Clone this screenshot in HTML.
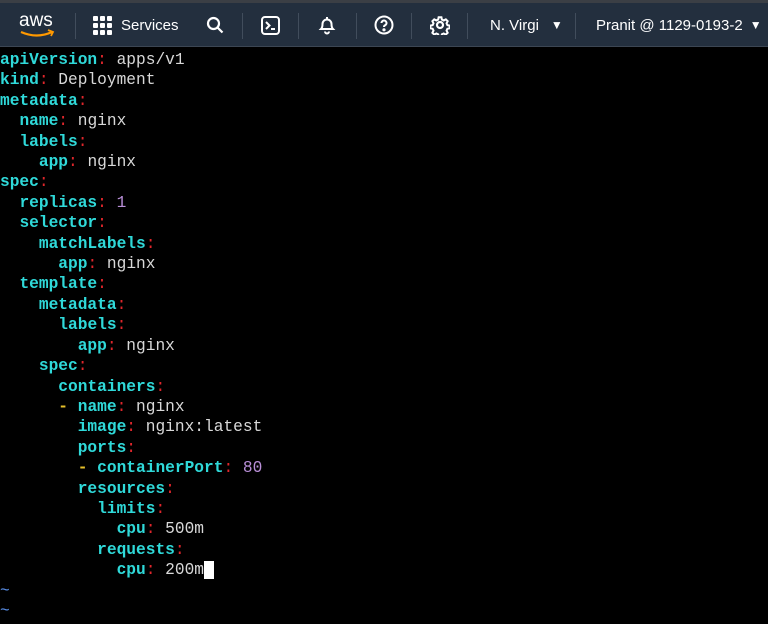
<!DOCTYPE html>
<html><head><style>
*{margin:0;padding:0;box-sizing:border-box}
body{width:768px;height:624px;background:#000;overflow:hidden;font-family:"Liberation Sans",sans-serif}
.top{position:absolute;left:0;top:0;width:768px;height:3px;background:#3b3f45}
.hdr{position:absolute;left:0;top:3px;width:768px;height:44px;background:#232f3e;border-bottom:1px solid #3c4653;color:#fff;font-size:15px}
.hdr .it{position:absolute;top:0;height:44px;display:flex;align-items:center}
.sep{position:absolute;top:10px;width:1px;height:26px;background:#414d5c}
pre{position:absolute;left:0;top:50px;font-family:"Liberation Mono",monospace;font-size:16.2px;line-height:20.4px;color:#d8d8d8}
.k{color:#2fd9d9;font-weight:bold}
.c{color:#e0262b}
.n{color:#b98fd8}
.d{color:#e6c02a;font-weight:bold}
.t{color:#5a8fe8}
.cur{background:#fff;color:#000}
</style></head><body>
<div class="top"></div>
<div class="hdr">
 <div class="it" style="left:18px;">
  <svg width="40" height="32" viewBox="0 0 40 32"><text x="1" y="17" fill="#fff" font-family="Liberation Sans" font-size="19">aws</text><path d="M3 23 Q19 30 34 23" stroke="#f90" stroke-width="2.2" fill="none"/><path d="M30 21 L35 23 L33 27" stroke="#f90" stroke-width="1.8" fill="none"/></svg>
 </div>
 <div class="sep" style="left:75px"></div>
 <div class="it" style="left:93px;">
  <svg width="19" height="19" viewBox="0 0 19 19" fill="#fff"><rect x="0" y="0" width="5" height="5" rx="1"/><rect x="7" y="0" width="5" height="5" rx="1"/><rect x="14" y="0" width="5" height="5" rx="1"/><rect x="0" y="7" width="5" height="5" rx="1"/><rect x="7" y="7" width="5" height="5" rx="1"/><rect x="14" y="7" width="5" height="5" rx="1"/><rect x="0" y="14" width="5" height="5" rx="1"/><rect x="7" y="14" width="5" height="5" rx="1"/><rect x="14" y="14" width="5" height="5" rx="1"/></svg>
  <span style="margin-left:9px">Services</span>
 </div>
 <div class="it" style="left:206px;"><svg width="18" height="18" viewBox="0 0 18 18" fill="none" stroke="#fff" stroke-width="2.2"><circle cx="7.5" cy="7.5" r="5.5"/><path d="M11.5 11.5L16.5 16.5"/></svg></div>
 <div class="sep" style="left:242px"></div>
 <div class="it" style="left:261px;"><svg width="19" height="19" viewBox="0 0 19 19" fill="none" stroke="#fff" stroke-width="2"><rect x="1" y="1" width="17" height="17" rx="3"/><path d="M5 6l3.5 3.5L5 13M10 13h4"/></svg></div>
 <div class="sep" style="left:298px"></div>
 <div class="it" style="left:317px;"><svg width="20" height="20" viewBox="0 0 20 20" fill="none" stroke="#fff" stroke-width="2"><path d="M4 14c1.5-1.5 1.5-3 1.5-5a4.5 4.5 0 0 1 9 0c0 2 0 3.5 1.5 5z"/><path d="M10 2v2M8 16.5a2 2 0 0 0 4 0"/></svg></div>
 <div class="sep" style="left:356px"></div>
 <div class="it" style="left:374px;"><svg width="20" height="20" viewBox="0 0 20 20" fill="none" stroke="#fff" stroke-width="2"><circle cx="10" cy="10" r="8.5"/><path d="M7.5 8a2.5 2.5 0 1 1 3.5 2.3c-.8.4-1 .9-1 1.7"/><circle cx="10" cy="14.8" r=".6" fill="#fff"/></svg></div>
 <div class="sep" style="left:411px"></div>
 <div class="it" style="left:430px;"><svg width="20" height="20" viewBox="0 0 20 20" fill="none" stroke="#fff" stroke-width="2.2"><circle cx="10" cy="10" r="3"/><path d="M8.5 1.5h3l.5 2.5 2 1 2.3-1.2 2 2-1.2 2.3.9 2 2.5.5v3l-2.5.5-.9 2 1.2 2.3-2 2-2.3-1.2-2 .9-.5 2.5h-3l-.5-2.5-2-.9-2.3 1.2-2-2 1.2-2.3-.9-2-2.5-.5v-3l2.5-.5.9-2-1.2-2.3 2-2 2.3 1.2 2-1z" transform="scale(.92) translate(.9 .9)"/></svg></div>
 <div class="sep" style="left:467px"></div>
 <div class="it" style="left:490px;">N. Virgi <span style="font-size:12px;margin-left:12px">▼</span></div>
 <div class="sep" style="left:575px"></div>
 <div class="it" style="left:596px;">Pranit @ 1129-0193-2 <span style="font-size:12px;margin-left:7px">▼</span></div>
</div>
<pre><span class="k">apiVersion</span><span class="c">:</span> apps/v1
<span class="k">kind</span><span class="c">:</span> Deployment
<span class="k">metadata</span><span class="c">:</span>
  <span class="k">name</span><span class="c">:</span> nginx
  <span class="k">labels</span><span class="c">:</span>
    <span class="k">app</span><span class="c">:</span> nginx
<span class="k">spec</span><span class="c">:</span>
  <span class="k">replicas</span><span class="c">:</span> <span class="n">1</span>
  <span class="k">selector</span><span class="c">:</span>
    <span class="k">matchLabels</span><span class="c">:</span>
      <span class="k">app</span><span class="c">:</span> nginx
  <span class="k">template</span><span class="c">:</span>
    <span class="k">metadata</span><span class="c">:</span>
      <span class="k">labels</span><span class="c">:</span>
        <span class="k">app</span><span class="c">:</span> nginx
    <span class="k">spec</span><span class="c">:</span>
      <span class="k">containers</span><span class="c">:</span>
      <span class="d">-</span> <span class="k">name</span><span class="c">:</span> nginx
        <span class="k">image</span><span class="c">:</span> nginx:latest
        <span class="k">ports</span><span class="c">:</span>
        <span class="d">-</span> <span class="k">containerPort</span><span class="c">:</span> <span class="n">80</span>
        <span class="k">resources</span><span class="c">:</span>
          <span class="k">limits</span><span class="c">:</span>
            <span class="k">cpu</span><span class="c">:</span> 500m
          <span class="k">requests</span><span class="c">:</span>
            <span class="k">cpu</span><span class="c">:</span> 200m<span class="cur"> </span>
<span class="t">~</span>
<span class="t">~</span></pre>
</body></html>
